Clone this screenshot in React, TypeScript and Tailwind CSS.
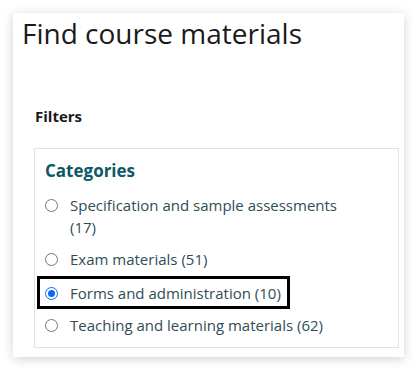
import React, { useState } from 'react';

const categories = [
  { id: 'spec', label: 'Specification and sample assessments (17)' },
  { id: 'exam', label: 'Exam materials (51)' },
  { id: 'forms', label: 'Forms and administration (10)' },
  { id: 'teach', label: 'Teaching and learning materials (62)' },
];

const App: React.FC = () => {
  const [selected, setSelected] = useState('forms');

  return (
    <div className="w-[418px] h-[370px] bg-white pt-[13px] pl-[13px] font-['Open_Sans',sans-serif]">
      <div className="w-[391px] h-[344px] bg-white shadow-[0_2px_10px_rgba(0,0,0,0.18)] pl-[9px] pr-[5px]">
        <h1 className="text-[28px] leading-[40px] text-[#1a1a1a]">Find course materials</h1>
        <h2 className="mt-[52px] ml-[13px] text-[15px] font-bold text-[#1a1a1a] leading-[22px]">Filters</h2>
        <div className="mt-[21px] ml-[12px] border border-[#dde3e6] h-[200px] pl-[10px] pt-[10px]">
          <h3 className="text-[17px] font-bold text-[#0d5966] leading-[24px]">Categories</h3>
          <div className="mt-[11px] flex flex-col gap-[10px]">
            {categories.map((c) => {
              const active = selected === c.id;
              return (
                <label
                  key={c.id}
                  className={`flex items-start gap-[12px] cursor-pointer w-fit pr-[6px] ${
                    active ? 'outline-3 outline-black -ml-[5px] pl-[5px] pt-[3px] pb-[2px] -mt-[1px] -mb-[2px]' : ''
                  }`}
                >
                  <span
                    className={`mt-[5px] w-[13px] h-[13px] shrink-0 rounded-full border flex items-center justify-center bg-white ${
                      active ? 'border-[#0a6cf5]' : 'border-[#767676]'
                    }`}
                  >
                    {active && <span className="w-[7px] h-[7px] rounded-full bg-[#0a6cf5]" />}
                  </span>
                  <input
                    type="radio"
                    className="hidden"
                    checked={active}
                    onChange={() => setSelected(c.id)}
                  />
                  <span className="text-[15px] leading-[22px] text-[#2f4d55] max-w-[280px]">{c.label}</span>
                </label>
              );
            })}
          </div>
        </div>
      </div>
    </div>
  );
};

export default App;
